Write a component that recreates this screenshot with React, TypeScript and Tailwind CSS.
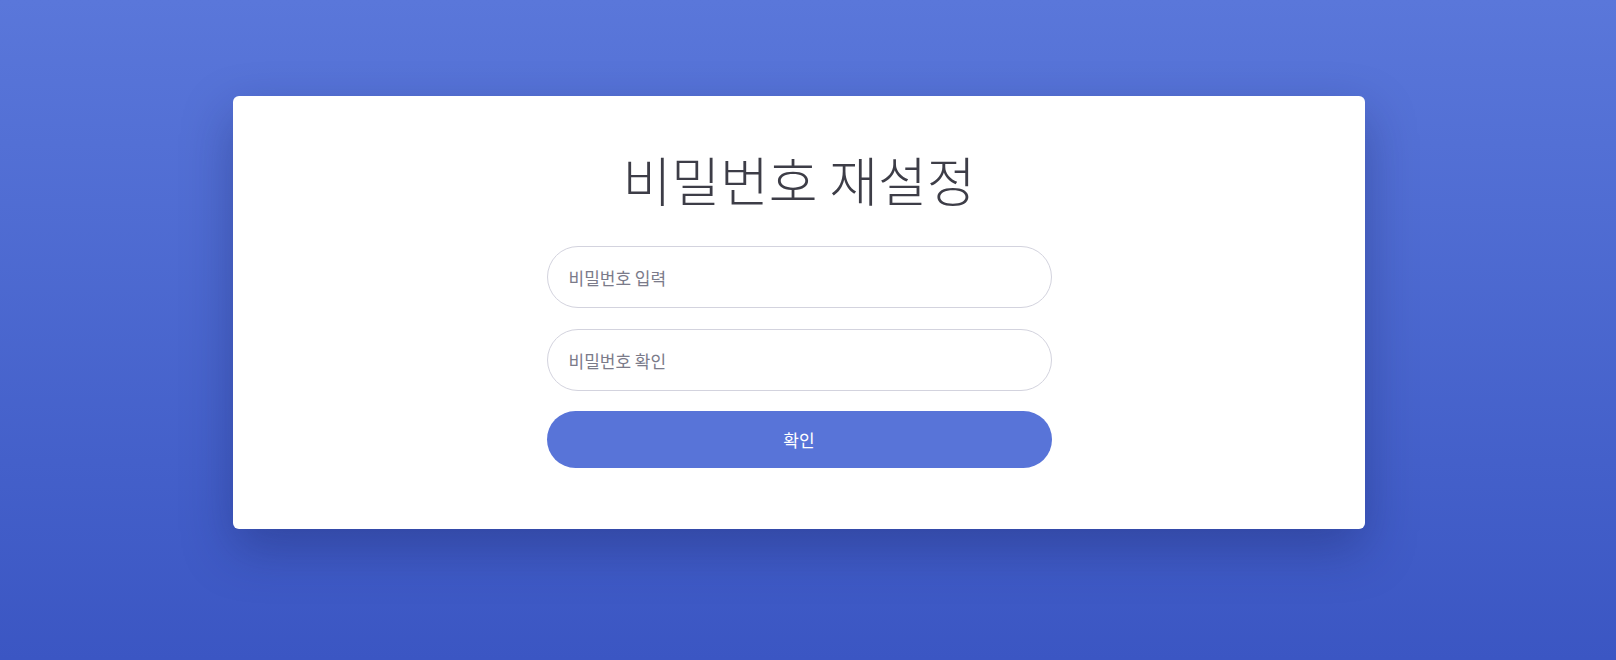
import React from 'react';

const font = { fontFamily: '"Noto Sans CJK KR", "Noto Sans", sans-serif' };

const App: React.FC = () => {
    return (
        <div
            className="min-h-[660px] w-full bg-gradient-to-b from-[#5a77da] to-[#3b56c3] flex justify-center pt-[96px] pr-[18px]"
            style={font}
        >
            <div className="w-[1132px] h-[433px] bg-white rounded-md shadow-[0_20px_50px_rgba(20,30,90,0.35)] flex flex-col items-center">
                <h1 className="mt-[52px] text-[53px] leading-[62px] font-light text-[#3d3d47]">비밀번호 재설정</h1>

                <div className="mt-[36px] w-[505px] flex flex-col">
                    <input
                        type="password"
                        placeholder="비밀번호 입력"
                        className="h-[62px] rounded-full border border-[#d3d3de] px-[21px] text-[17px] text-[#333] placeholder:text-[#7b7b8a] outline-none"
                    />
                    <input
                        type="password"
                        placeholder="비밀번호 확인"
                        className="mt-[21px] h-[62px] rounded-full border border-[#d3d3de] px-[21px] text-[17px] text-[#333] placeholder:text-[#7b7b8a] outline-none"
                    />
                    <button className="mt-[20px] h-[57px] rounded-full bg-[#5874d8] text-white text-[17px]">
                        확인
                    </button>
                </div>
            </div>
        </div>
    );
};

export default App;
